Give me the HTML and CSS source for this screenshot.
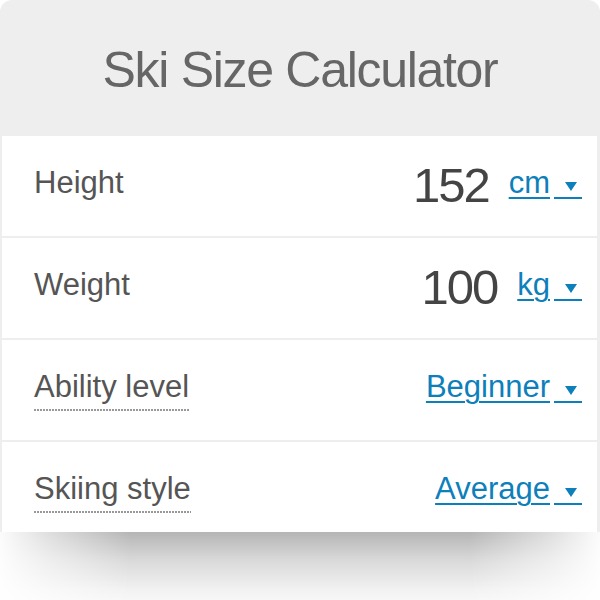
FILE: index.html
```html
<!DOCTYPE html>
<html>
<head>
    <meta charset="UTF-8">
    <link rel="stylesheet" href="styles.css">
</head>
<body>
    <div class="calc">
        <h1 class="calc-title">Ski Size Calculator</h1>

        <div class="fields">
            <div class="field">
                <span class="label">Height</span>
                <span class="input"><span class="value">152</span><a class="unit" href="#">cm</a><span class="caret"></span></span>
            </div>
            <div class="field">
                <span class="label">Weight</span>
                <span class="input"><span class="value">100</span><a class="unit" href="#">kg</a><span class="caret"></span></span>
            </div>
            <div class="field">
                <span class="label hint">Ability level</span>
                <span class="input"><a class="unit" href="#">Beginner</a><span class="caret"></span></span>
            </div>
            <div class="field">
                <span class="label hint">Skiing style</span>
                <span class="input"><a class="unit" href="#">Average</a><span class="caret"></span></span>
            </div>
        </div>
    </div>
    <div class="calc-shadow"></div>
</body>
</html>
```

FILE: styles.css
```css
body {
    margin: 0;
    background: #fff;
    font-family: "Liberation Sans", Arial, sans-serif;
}
.calc {
    background: #eee;
    border-radius: 12px 12px 0 0;
}
/* soft drop shadow under the widget */
.calc-shadow {
    height: 68px;
    background: linear-gradient(rgba(0, 0, 0, 0.29), rgba(0, 0, 0, 0.15) 28px, rgba(0, 0, 0, 0.05) 58px, rgba(0, 0, 0, 0.03));
    -webkit-mask-image: linear-gradient(to right, rgba(0, 0, 0, 0.05), rgba(0, 0, 0, 0.45) 50px, #000 130px, #000 470px, rgba(0, 0, 0, 0.45) 550px, rgba(0, 0, 0, 0.05));
    mask-image: linear-gradient(to right, rgba(0, 0, 0, 0.05), rgba(0, 0, 0, 0.45) 50px, #000 130px, #000 470px, rgba(0, 0, 0, 0.45) 550px, rgba(0, 0, 0, 0.05));
}
.calc-title {
    margin: 0;
    height: 136px;
    box-sizing: border-box;
    padding-top: 45px;
    text-align: center;
    font-size: 50px;
    font-weight: normal;
    line-height: 50px;
    letter-spacing: -1.3px;
    color: #666;
}
.fields {
    display: flex;
    flex-direction: column;
    gap: 2px;
    margin: 0 3px 0 2px;
}
.field {
    display: flex;
    align-items: baseline;
    justify-content: space-between;
    height: 100px;
    box-sizing: border-box;
    padding: 27px 15px 0 32px;
    background: #fff;
}
.field:last-child {
    height: 90px;
}
.label {
    font-size: 31px;
    line-height: 40px;
    color: #555;
}
.label.hint {
    padding-bottom: 4px;
    background: linear-gradient(to right, #999 2px, transparent 2px) left bottom / 3px 2px repeat-x;
}
.input {
    font-size: 31px;
    line-height: 40px;
    white-space: nowrap;
}
.value {
    font-size: 49px;
    letter-spacing: -2px;
    color: #444;
    vertical-align: -9px;
    margin-right: 20px;
}
.unit {
    color: #0d7fbb;
    text-decoration: underline;
    text-decoration-thickness: 2px;
    text-underline-offset: 4px;
}
.caret {
    display: inline-block;
    width: 28px;
    box-sizing: border-box;
    padding: 0 0 6px 11px;
    margin: 0 0 -6px 4px;
    border-bottom: 2px solid #0d7fbb;
}
.caret::after {
    content: "";
    display: block;
    width: 0;
    border-left: 6.5px solid transparent;
    border-right: 6.5px solid transparent;
    border-top: 9px solid #0d7fbb;
}
```
